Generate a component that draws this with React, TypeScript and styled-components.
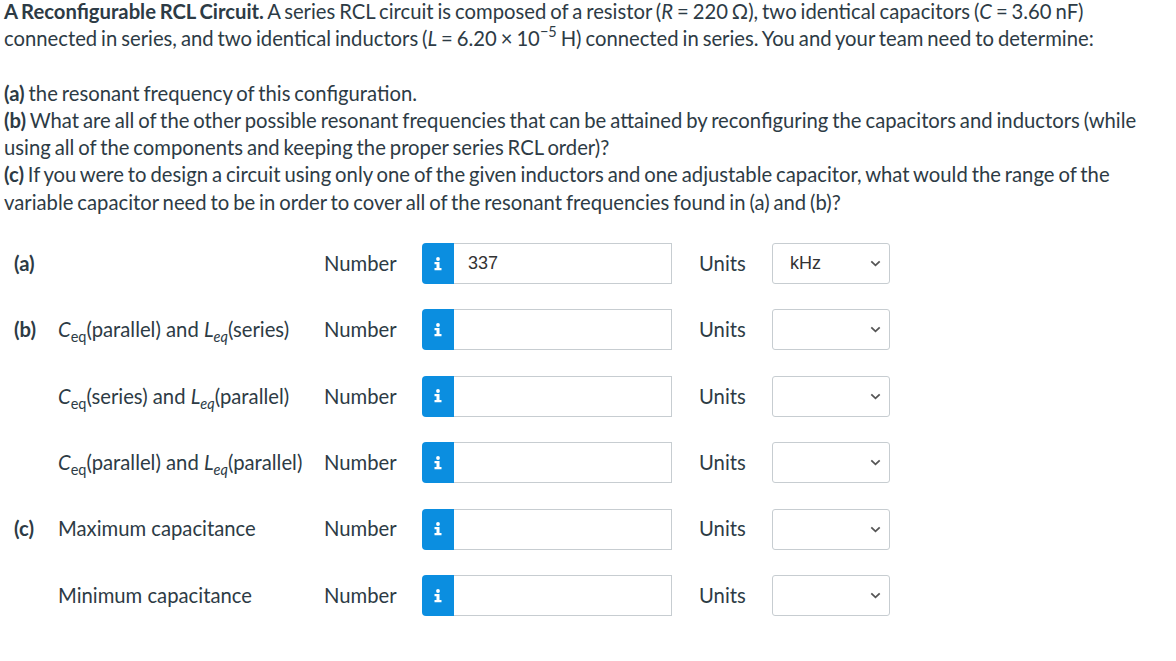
import React from 'react';
import styled, { createGlobalStyle } from 'styled-components';

const GlobalStyle = createGlobalStyle`
  html, body {
    margin: 0;
    padding: 0;
    background: #fff;
  }
  body {
    font-family: Lato, 'Open Sans', sans-serif;
    font-size: 20.25px;
    line-height: 27.3px;
    color: #2d3b45;
  }
`;

const Page = styled.div`
  width: 1150px;
  padding: 0 0 0 4px;
  margin-top: -2px;
`;

const Para = styled.p`
  margin: 0 0 27px 0;
  word-spacing: -1.25px;
`;

const Table = styled.div`
  display: grid;
  grid-template-columns: 44px 266px 98px 250px 100px 118px;
  grid-auto-rows: 41px;
  row-gap: 25.4px;
  padding-left: 10px;
  margin-top: 27px;
  align-items: center;
`;

const PartLabel = styled.div`
  font-weight: 700;
`;

const Desc = styled.div`
  white-space: nowrap;
`;

const Sub = styled.sub<{ $italic?: boolean }>`
  font-size: 14.5px;
  font-style: ${(p) => (p.$italic ? 'italic' : 'normal')};
  vertical-align: -5px;
  line-height: 0;
`;

const Sup = styled.sup`
  font-size: 14.5px;
  vertical-align: 9px;
  line-height: 0;
`;

const Cell = styled.div`
  white-space: nowrap;
`;

const UnitsCell = styled.div`
  padding-left: 27px;
`;

const InputGroup = styled.div`
  display: flex;
  height: 41px;
`;

const InfoButton = styled.div`
  width: 32px;
  height: 41px;
  background: #0b8ee0;
  border-radius: 4px 0 0 4px;
  display: flex;
  align-items: center;
  justify-content: center;
  flex-shrink: 0;
`;

const TextBox = styled.div`
  flex: 1;
  height: 41px;
  box-sizing: border-box;
  border: 1px solid #c7cdd1;
  border-left: none;
  display: flex;
  align-items: center;
  padding-left: 14px;
  font-family: 'Liberation Sans', Arial, sans-serif;
  font-size: 18px;
  color: #333;
`;

const SelectBox = styled.div`
  height: 41px;
  box-sizing: border-box;
  border: 1px solid #c7cdd1;
  border-radius: 3px;
  display: flex;
  align-items: center;
  justify-content: space-between;
  padding: 0 8px 0 17px;
  font-family: 'Liberation Sans', Arial, sans-serif;
  font-size: 18px;
  color: #333;
`;

const InfoIcon = () => (
  <svg width="10" height="14" viewBox="0 0 10 14">
    <circle cx="5" cy="2" r="1.9" fill="#fff" />
    <path d="M1.5 5h5v6h2v2.3h-7V11h2V7.3h-2z" fill="#fff" />
  </svg>
);

const Chevron = () => (
  <svg width="11" height="7" viewBox="0 0 11 7">
    <path d="M1.3 1.3 5.5 5.3l4.2-4" stroke="#555" strokeWidth="1.8" fill="none" />
  </svg>
);

type Row = {
  part?: string;
  desc: React.ReactNode;
  value?: string;
  unit?: string;
};

const C = ({ kind }: { kind: string }) => (
  <>
    <i>C</i>
    <Sub>eq</Sub>({kind})
  </>
);
const L = ({ kind }: { kind: string }) => (
  <>
    <i>L</i>
    <Sub $italic>eq</Sub>({kind})
  </>
);

const rows: Row[] = [
  { part: '(a)', desc: null, value: '337', unit: 'kHz' },
  {
    part: '(b)',
    desc: (
      <>
        <C kind="parallel" /> and <L kind="series" />
      </>
    ),
  },
  {
    desc: (
      <>
        <C kind="series" /> and <L kind="parallel" />
      </>
    ),
  },
  {
    desc: (
      <>
        <C kind="parallel" /> and <L kind="parallel" />
      </>
    ),
  },
  { part: '(c)', desc: 'Maximum capacitance' },
  { desc: 'Minimum capacitance' },
];

export default function App() {
  return (
    <Page>
      <GlobalStyle />
      <Para>
        <b>A Reconfigurable RCL Circuit.</b> A series RCL circuit is composed of a resistor (
        <i>R</i> = 220 Ω), two identical capacitors (<i>C</i> = 3.60 nF) connected in series, and
        two identical inductors (<i>L</i> = 6.20 × 10<Sup>−5</Sup> H) connected in series. You and
        your team need to determine:
      </Para>
      <Para>
        <b>(a)</b> the resonant frequency of this configuration.
        <br />
        <b>(b)</b> What are all of the other possible resonant frequencies that can be attained by
        reconfiguring the capacitors and inductors (while using all of the components and keeping
        the proper series RCL order)?
        <br />
        <b>(c)</b> If you were to design a circuit using only one of the given inductors and one
        adjustable capacitor, what would the range of the variable capacitor need to be in order to
        cover all of the resonant frequencies found in (a) and (b)?
      </Para>
      <Table>
        {rows.map((r, i) => (
          <React.Fragment key={i}>
            <PartLabel>{r.part}</PartLabel>
            <Desc>{r.desc}</Desc>
            <Cell>Number</Cell>
            <InputGroup>
              <InfoButton>
                <InfoIcon />
              </InfoButton>
              <TextBox>{r.value}</TextBox>
            </InputGroup>
            <UnitsCell>Units</UnitsCell>
            <SelectBox>
              <span>{r.unit}</span>
              <Chevron />
            </SelectBox>
          </React.Fragment>
        ))}
      </Table>
    </Page>
  );
}
